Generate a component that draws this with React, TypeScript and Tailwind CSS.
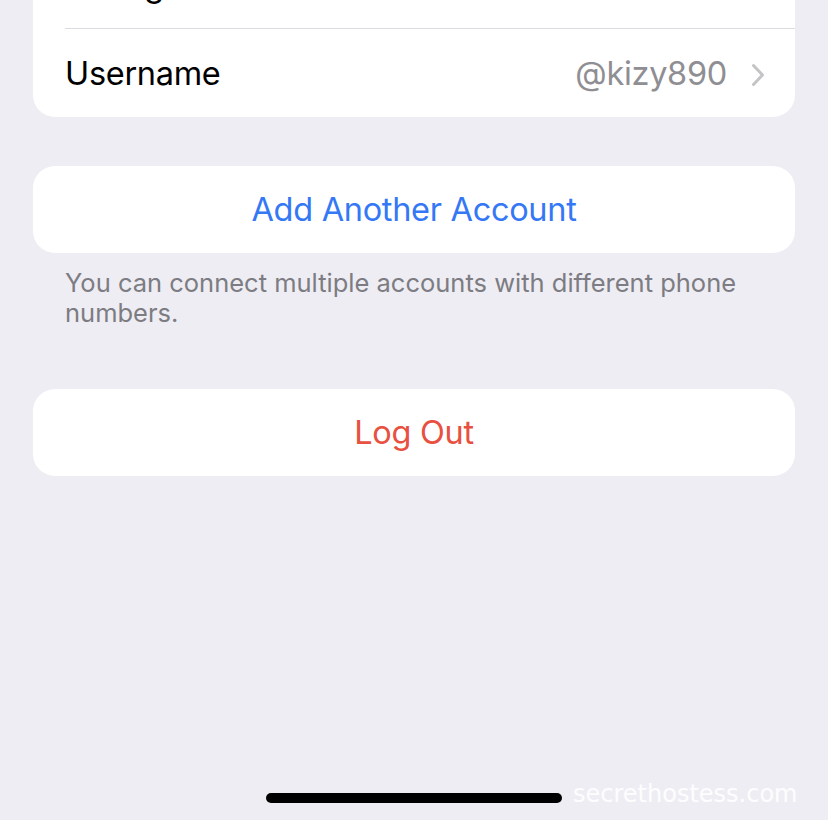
export default function App() {
  return (
    <div
      className="relative h-[820px] w-[828px] overflow-hidden bg-[#eeedf3] flex flex-col px-[33px]"
      style={{ fontFamily: 'Inter, "Liberation Sans", sans-serif' }}
    >
      {/* profile rows card, top is cut off by the screenshot */}
      <div className="-mt-[58px] bg-white rounded-[22px] overflow-hidden">
        <div className="h-[87px] pl-[32px] flex items-center">
          <div className="h-full w-full flex items-center pt-[3px] border-b border-[#dcdce0] text-[32.5px] text-black tracking-[-0.3px]">
            Change Number
          </div>
        </div>
        <div className="h-[88px] pl-[32px] pr-[30px] pt-[3px] flex items-center justify-between">
          <span className="text-[32.5px] text-black tracking-[-0.3px]">Username</span>
          <div className="flex items-center gap-[24px]">
            <span className="text-[32.5px] text-[#8e8e93] tracking-[-0.3px]">@kizy890</span>
            <svg width="14" height="24" viewBox="0 0 14 24" fill="none">
              <path d="M2.5 2.5 L11.5 12 L2.5 21.5" stroke="#c4c4c7" strokeWidth="3" strokeLinecap="round" strokeLinejoin="round" />
            </svg>
          </div>
        </div>
      </div>

      {/* add account */}
      <button className="mt-[49px] h-[87px] pt-[2px] bg-white rounded-[22px] flex items-center justify-center text-[32.5px] text-[#3478f6] tracking-[-0.3px]">
        Add Another Account
      </button>
      <p className="mt-[15px] px-[32px] text-[25.5px] leading-[30px] text-[#7c7c82]">
        You can connect multiple accounts with different phone numbers.
      </p>

      {/* log out */}
      <button className="mt-[61px] h-[87px] pt-[2px] bg-white rounded-[22px] flex items-center justify-center text-[32.5px] text-[#e8503f] tracking-[-0.3px]">
        Log Out
      </button>

      {/* home indicator */}
      <div className="mt-auto mb-[17px] flex justify-center">
        <div className="h-[10px] w-[296px] rounded-full bg-black" />
      </div>

      <span
        className="absolute left-[573px] top-[776px] text-[24px] text-white/90"
        style={{ fontFamily: '"DejaVu Sans", sans-serif' }}
      >
        secrethostess.com
      </span>
    </div>
  );
}
